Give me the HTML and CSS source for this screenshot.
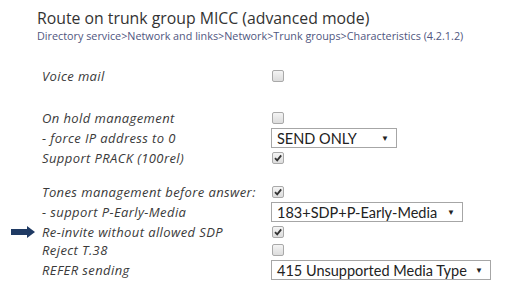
FILE: index.html
```html
<!DOCTYPE html>
<html lang="en">
  <head>
    <meta charset="UTF-8" />
    <title>Route on trunk group MICC</title>
    <link rel="stylesheet" href="styles.css">
  </head>
  <body>
    <div class="page">
      <div class="header">
        <h1 class="title">Route on trunk group MICC (advanced mode)</h1>
        <div class="crumbs">Directory service&gt;Network and links&gt;Network&gt;Trunk groups&gt;Characteristics (4.2.1.2)</div>
      </div>

      <div class="form">
        <div class="row row-first">
          <div class="mark"></div>
          <label class="label">Voice mail</label>
          <div class="field"><span class="cb"></span></div>
        </div>

        <div class="row row-gap">
          <div class="mark"></div>
          <label class="label">On hold management</label>
          <div class="field"><span class="cb"></span></div>
        </div>
        <div class="row row-select">
          <div class="mark"></div>
          <label class="label">- force IP address to 0</label>
          <div class="field">
            <div class="select w-sm"><span>SEND ONLY</span><span class="caret">▼</span></div>
          </div>
        </div>
        <div class="row">
          <div class="mark"></div>
          <label class="label">Support PRACK (100rel)</label>
          <div class="field"><span class="cb checked"><svg viewBox="0 0 10 10"><path d="M2 5.2 L4.2 7.4 L8.2 2.4" /></svg></span></div>
        </div>

        <div class="row row-gap-sm">
          <div class="mark"></div>
          <label class="label">Tones management before answer:</label>
          <div class="field"><span class="cb checked"><svg viewBox="0 0 10 10"><path d="M2 5.2 L4.2 7.4 L8.2 2.4" /></svg></span></div>
        </div>
        <div class="row row-select">
          <div class="mark"></div>
          <label class="label">- support P-Early-Media</label>
          <div class="field">
            <div class="select w-md"><span>183+SDP+P-Early-Media</span><span class="caret">▼</span></div>
          </div>
        </div>
        <div class="row">
          <div class="mark">
            <svg class="arrow" viewBox="0 0 24 12"><path d="M0 3 H16 V0 L24 6 L16 12 V9 H0 Z" /></svg>
          </div>
          <label class="label">Re-invite without allowed SDP</label>
          <div class="field"><span class="cb checked"><svg viewBox="0 0 10 10"><path d="M2 5.2 L4.2 7.4 L8.2 2.4" /></svg></span></div>
        </div>
        <div class="row">
          <div class="mark"></div>
          <label class="label">Reject T.38</label>
          <div class="field"><span class="cb"></span></div>
        </div>
        <div class="row row-select">
          <div class="mark"></div>
          <label class="label">REFER sending</label>
          <div class="field">
            <div class="select w-lg"><span>415 Unsupported Media Type</span><span class="caret">▼</span></div>
          </div>
        </div>
      </div>
    </div>
  </body>
</html>
```

FILE: styles.css
```css
* {
  margin: 0;
  padding: 0;
  box-sizing: border-box;
}

body {
  background: #fff;
  font-family: "Open Sans", sans-serif;
  color: #333;
}

.page {
  padding: 8px 0 0 11px;
}

.header {
  padding-left: 26px;
}

.title {
  font-size: 15.8px;
  font-weight: normal;
  line-height: 20px;
  color: #333;
}

.crumbs {
  font-size: 10.8px;
  line-height: 16px;
  color: #4f5680;
}

/* Form rows */
.form {
  padding-top: 23px;
}

.row {
  display: grid;
  grid-template-columns: 31px 229px auto;
  align-items: center;
  height: 18px;
}

.row-select {
  height: 22px;
}

.row-gap {
  margin-top: 24px;
}

.row-gap-sm {
  margin-top: 16px;
}

.mark {
  display: flex;
  align-items: center;
}

.arrow {
  width: 24px;
  height: 12px;
  fill: #1f3a63;
}

.label {
  font-style: italic;
  font-size: 13px;
  letter-spacing: 0.4px;
  color: #3a3a3a;
  white-space: nowrap;
}

.field {
  display: flex;
  align-items: center;
}

/* Checkbox */
.cb {
  display: inline-block;
  width: 12px;
  height: 12px;
  margin-left: 1px;
  border: 1px solid #a9a9a9;
  border-radius: 2px;
  background: linear-gradient(#f4f4f4, #dcdcdc);
}

.cb svg {
  display: block;
  width: 10px;
  height: 10px;
}

.cb svg path {
  fill: none;
  stroke: #333;
  stroke-width: 1.8;
}

/* Select */
.select {
  display: flex;
  justify-content: space-between;
  align-items: center;
  height: 20px;
  padding: 0 7px 0 5px;
  border: 1px solid #a6a6a6;
  background: #fff;
  font-family: "Lato", sans-serif;
  font-size: 14.5px;
  color: #222;
}

.caret {
  font-size: 8px;
  color: #222;
}

.w-sm {
  width: 126px;
}

.w-md {
  width: 192px;
}

.w-lg {
  width: 220px;
}
```
